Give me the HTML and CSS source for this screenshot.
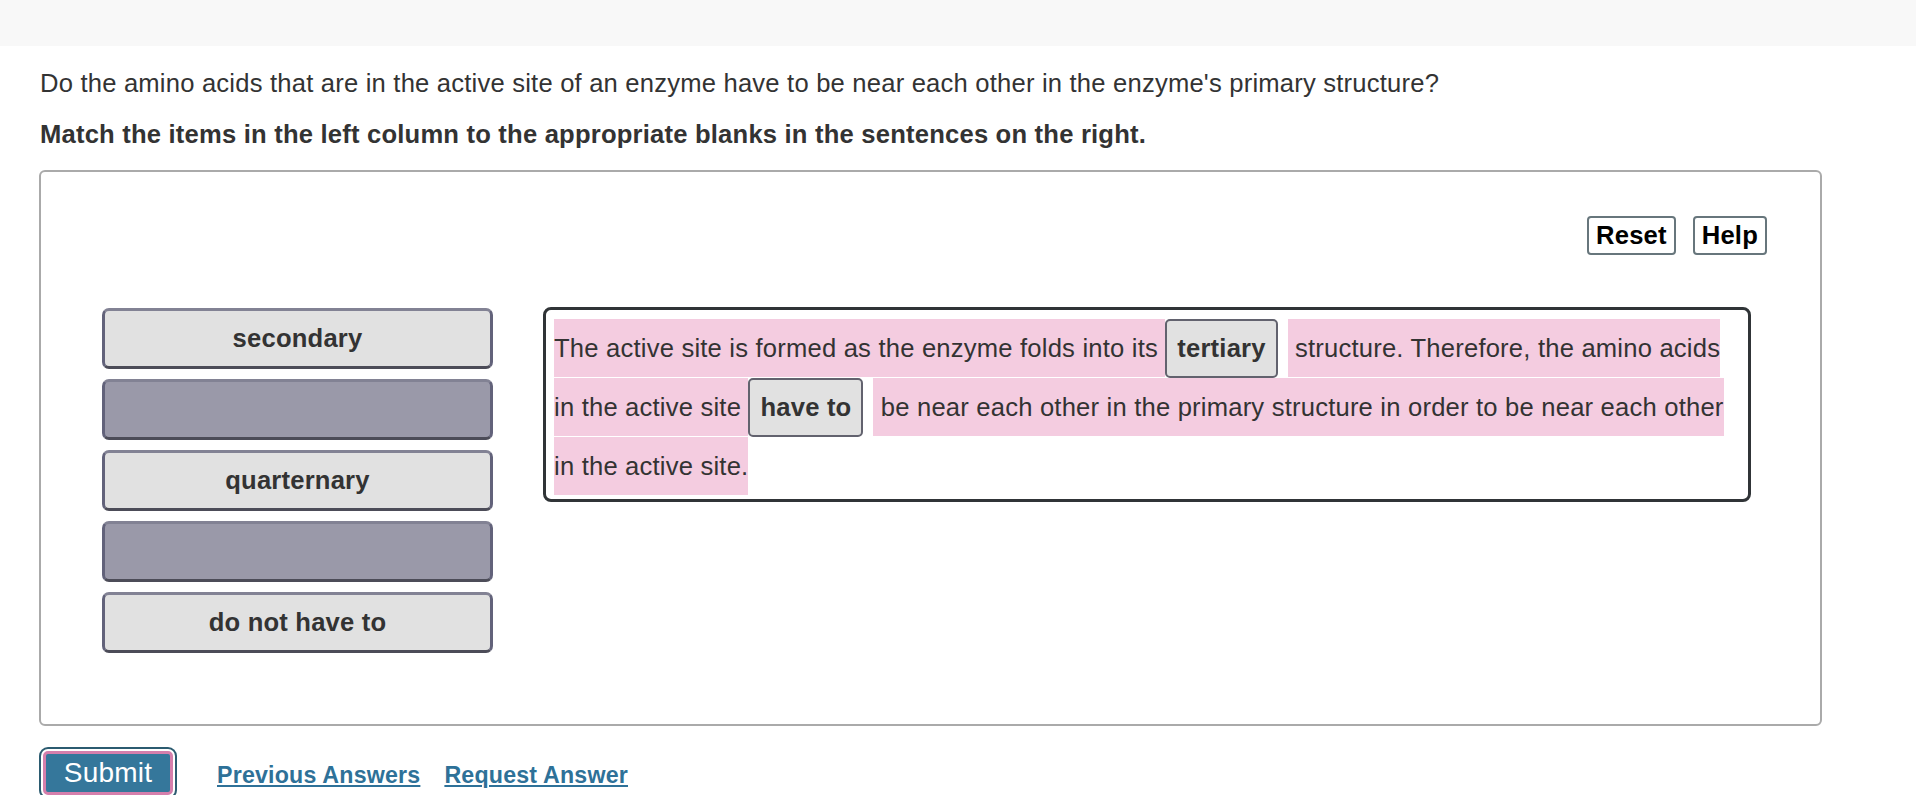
FILE: index.html
```html
<!DOCTYPE html>
<html lang="en">
<head>
<meta charset="utf-8">
<title>Match the items</title>
<link rel="stylesheet" href="styles.css">
</head>
<body>
<header class="topbar"></header>
<main class="page">
  <p class="question">Do the amino acids that are in the active site of an enzyme have to be near each other in the enzyme's primary structure?</p>
  <p class="instructions">Match the items in the left column to the appropriate blanks in the sentences on the right.</p>
  <section class="activity">
    <div class="toolbar">
      <button class="tool">Reset</button>
      <button class="tool">Help</button>
    </div>
    <div class="workspace">
      <ul class="items">
        <li class="item">secondary</li>
        <li class="item empty"></li>
        <li class="item">quarternary</li>
        <li class="item empty"></li>
        <li class="item">do not have to</li>
      </ul>
      <div class="sentences"><span class="seg">The active site is formed as the enzyme folds into its </span><span class="drop">tertiary</span><span class="seg"> structure. Therefore, the amino acids </span><span class="seg">in the active site </span><span class="drop">have to</span><span class="seg"> be near each other in the primary structure in order to be near each other </span><span class="seg">in the active site.</span></div>
    </div>
  </section>
  <div class="actions">
    <button class="submit">Submit</button>
    <a class="link" href="#">Previous Answers</a>
    <a class="link" href="#">Request Answer</a>
  </div>
</main>
</body>
</html>
```
FILE: styles.css
```css
html, body {
  margin: 0;
  padding: 0;
  background: #fff;
}
body {
  font-family: "Liberation Sans", Arial, Helvetica, sans-serif;
  color: #333;
  letter-spacing: 0.2px;
  overflow: hidden;
}
.topbar {
  height: 46px;
  background: #f8f8f8;
}
.page {
  padding: 0 94px 0 39px;
}
.question {
  margin: 22px 0 0 1px;
  font-size: 25.6px;
  line-height: 30px;
}
.instructions {
  margin: 21px 0 0 1px;
  font-size: 25.6px;
  line-height: 30px;
  font-weight: bold;
}
.activity {
  margin-top: 21px;
  border: 2px solid #aaa;
  border-radius: 6px;
  padding: 44px 0 71px 0;
}
.toolbar {
  display: flex;
  justify-content: flex-end;
  gap: 17px;
  padding-right: 53px;
}
.tool {
  height: 39px;
  box-sizing: border-box;
  border: 2px solid #67767c;
  border-radius: 4px;
  background: #fff;
  color: #000;
  font-family: inherit;
  letter-spacing: inherit;
  font-weight: bold;
  font-size: 25.6px;
  line-height: 35px;
  padding: 0 7px;
}
.workspace {
  display: flex;
  align-items: flex-start;
  gap: 50px;
  margin-top: 52px;
  padding-left: 61px;
}
.items {
  list-style: none;
  margin: 1px 0 0;
  padding: 0;
  width: 391px;
  display: flex;
  flex-direction: column;
  gap: 10px;
}
.item {
  height: 61px;
  box-sizing: border-box;
  border: 3px solid #62627a;
  border-top-color: #828294;
  border-bottom-color: #4c4c58;
  border-radius: 7px;
  background: #e1e1e1;
  font-weight: bold;
  font-size: 25.6px;
  line-height: 55px;
  text-align: center;
  color: #333;
}
.item.empty {
  background: #9a99a9;
}
.sentences {
  width: 1208px;
  height: 195px;
  box-sizing: border-box;
  border: 3px solid #303437;
  border-radius: 8px;
  padding: 9px 18px 2px 8px;
  font-size: 25.6px;
  line-height: 59px;
  color: #333;
}
.seg {
  background: #f4cce0;
  padding: 15.2px 0;
}
.drop {
  display: inline-block;
  vertical-align: top;
  height: 59px;
  box-sizing: border-box;
  border: 2px solid #62626e;
  border-radius: 5px;
  background: #e1e1e1;
  padding: 0 10px;
  line-height: 55px;
  font-weight: bold;
  margin-right: 10px;
}
.actions {
  display: flex;
  align-items: center;
  margin-top: 21px;
}
.submit {
  margin: 4px 0 0 4px;
  width: 130px;
  height: 44px;
  box-sizing: border-box;
  border: 3px solid #d57fac;
  border-radius: 5px;
  background: #35779b;
  color: #fff;
  font-family: inherit;
  letter-spacing: inherit;
  font-size: 28px;
  line-height: 36px;
  padding: 0;
  box-shadow: 0 0 0 2px #fff, 0 0 0 4px #2b5b70;
}
.link {
  margin-left: 24px;
  color: #2e7198;
  font-weight: bold;
  font-size: 23.2px;
  text-decoration: underline;
  margin-top: 8px;
}
.submit + .link {
  margin-left: 44px;
}
```
